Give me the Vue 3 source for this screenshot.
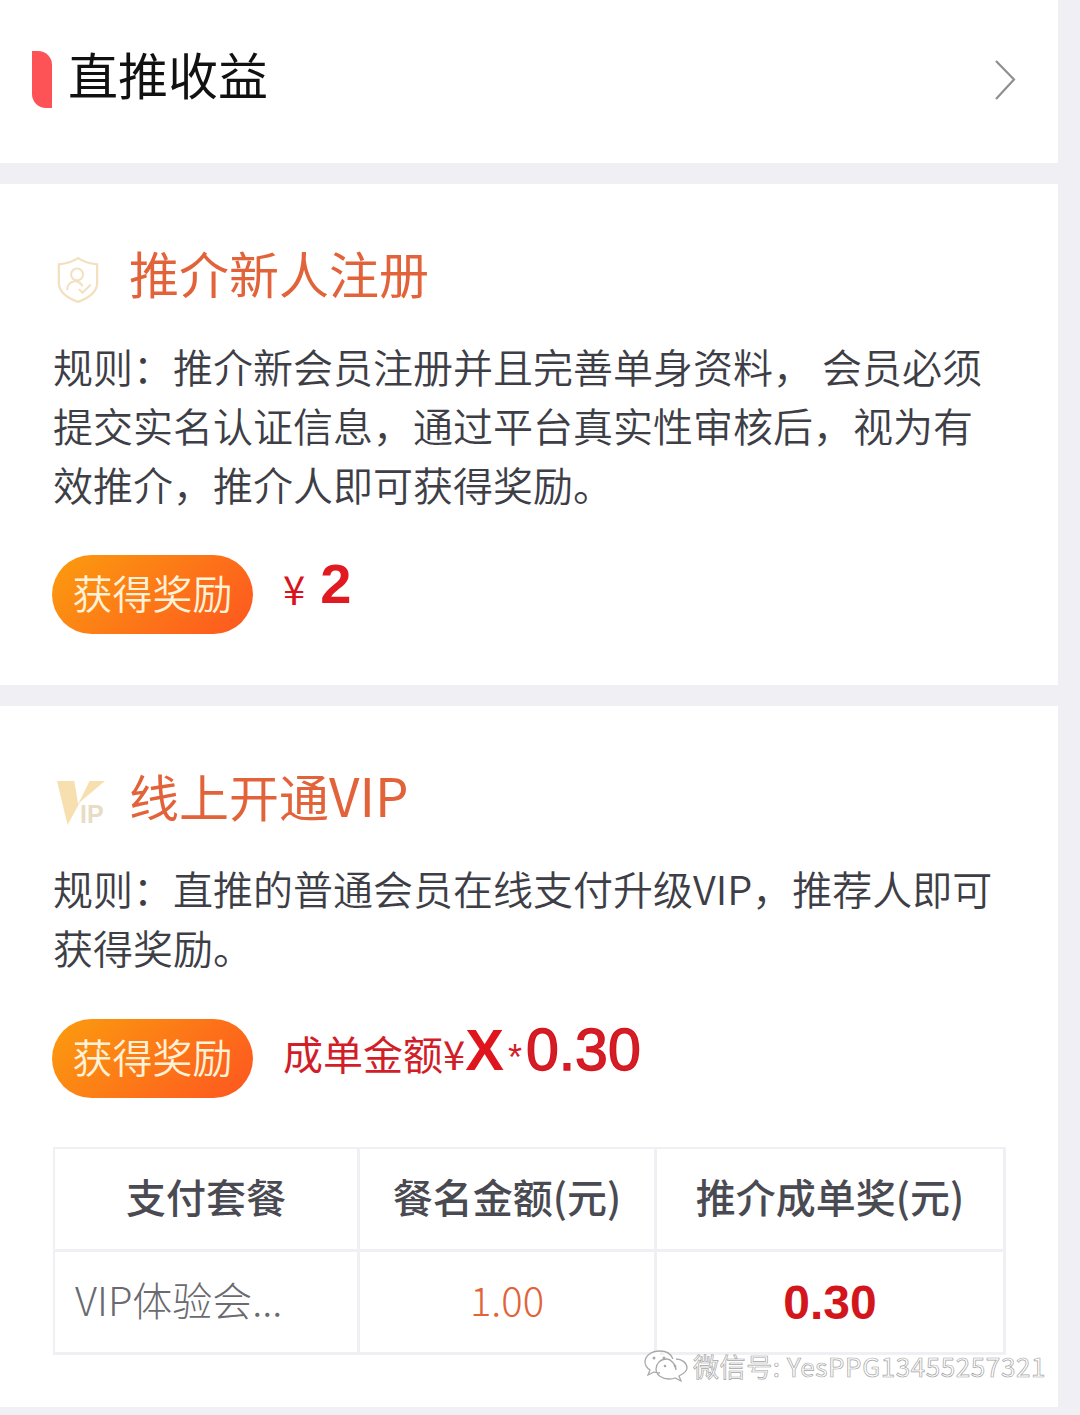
<script setup>
const rows = [{ name: 'VIP体验会...', price: '1.00', bonus: '0.30' }]
</script>

<template>
  <div class="page">
    <section class="card head">
      <span class="mark"></span>
      <h1>直推收益</h1>
      <svg class="arrow" width="24" height="44" viewBox="0 0 24 44">
        <path d="M3 3 L21 21.500 L3 41" fill="none" stroke="#8f8f8f" stroke-width="2.200" />
      </svg>
    </section>

    <section class="card rule-one">
      <div class="title">
        <svg class="ico shield" width="42" height="48" viewBox="0 0 46 52">
          <path d="M23 2 C29 6 36 8 44 9 V29 C44 39 34 46 23 50 C12 46 2 39 2 29 V9 C10 8 17 6 23 2 Z" fill="none" stroke="#f3e0bf" stroke-width="2.500" />
          <circle cx="22" cy="20" r="6.500" fill="none" stroke="#f3e0bf" stroke-width="2.200" />
          <path d="M11 37 C11 31 15 28 20 27 C24 28 27 30 28 33 M24 36 L28 40 L37 31" fill="none" stroke="#f3e0bf" stroke-width="2.200" />
        </svg>
        <h2>推介新人注册</h2>
      </div>
      <p class="desc">规则&#xFF1A;推介新会员注册并且完善单身资料&#xFF0C; 会员必须提交实名认证信息&#xFF0C;通过平台真实性审核后&#xFF0C;视为有效推介&#xFF0C;推介人即可获得奖励。</p>
      <div class="reward">
        <span class="btn">获得奖励</span>
        <span class="yen">¥</span>
        <span class="two">2</span>
      </div>
    </section>

    <section class="card rule-two">
      <div class="title">
        <svg class="ico vip" width="48" height="46" viewBox="0 0 50 48">
          <path d="M0 2 H18 L22 26 L34 2 H50 L24 24 L11 48 Z" fill="#f8dfb0" />
          <text x="24" y="46" class="ip">IP</text>
        </svg>
        <h2>线上开通<span class="latin">VIP</span></h2>
      </div>
      <p class="desc">规则&#xFF1A;直推的普通会员在线支付升级VIP&#xFF0C;推荐人即可获得奖励。</p>
      <div class="reward second">
        <span class="btn">获得奖励</span>
        <span class="amount">成单金额¥<b>X</b><i>*</i><em>0.30</em></span>
      </div>
      <div class="table">
        <div class="cell th">支付套餐</div>
        <div class="cell th">餐名金额(元)</div>
        <div class="cell th">推介成单奖(元)</div>
        <template v-for="r in rows" :key="r.name">
          <div class="cell td-name">{{ r.name }}</div>
          <div class="cell td-price">{{ r.price }}</div>
          <div class="cell td-bonus">{{ r.bonus }}</div>
        </template>
      </div>
    </section>

    <div class="watermark">
      <svg width="46" height="34" viewBox="0 0 46 34">
        <path d="M17 2 C8 2 2 7 2 13 C2 17 4 19 7 21 L5 26 L11 23 C13 24 15 24 17 24 M33 21 C33 15 27 10 24 10 C17 10 13 15 13 20 C13 26 19 30 26 30 C28 30 30 30 32 29 L38 32 L36 27 C40 25 44 22 44 19 C44 14 39 10 33 10 M17 2 C23 2 28 5 30 10" fill="#fff" stroke="#a9a9a9" stroke-width="1.300" />
        <circle cx="11" cy="9" r="1.500" fill="#a9a9a9" />
        <circle cx="21" cy="9" r="1.500" fill="#a9a9a9" />
        <circle cx="22" cy="17" r="1.300" fill="#a9a9a9" />
        <circle cx="32" cy="17" r="1.300" fill="#a9a9a9" />
      </svg>
      <span>微信号: YesPPG13455257321</span>
    </div>
  </div>
</template>

<style scoped>
.page {
  position: relative;
  width: 1080px;
  height: 1415px;
  overflow: hidden;
  background: #f0f0f4;
  font-family: "Noto Sans CJK SC", "Liberation Sans", sans-serif;
  font-weight: 300;
}

.card {
  width: 1058px;
  background: #fff;
  box-sizing: border-box;
}

.head {
  height: 163px;
  display: flex;
  align-items: center;
  padding-left: 32px;
  margin-bottom: 21px;
}

.mark {
  width: 20px;
  height: 57px;
  margin-bottom: 5px;
  background: #fe5356;
  border-radius: 0 14px 0 14px;
}

h1 {
  margin: 0 0 17px 16px;
  font-size: 50px;
  line-height: 60px;
  font-weight: 400;
  color: #111;
}

.arrow {
  margin-left: auto;
  margin-right: 41px;
  margin-bottom: 4px;
}

.rule-one {
  height: 501px;
  padding: 58px 0 0 53px;
  margin-bottom: 21px;
}

.rule-two {
  height: 701px;
  padding: 58px 0 0 53px;
}

.title {
  display: flex;
  align-items: center;
  height: 60px;
}

.ico {
  flex: none;
  overflow: visible;
}

.shield {
  margin: 16px 4px 0;
}

.vip {
  margin: 16px -2px 0 4px;
}

.ip {
  font-family: "Liberation Sans", sans-serif;
  font-size: 26px;
  font-weight: 700;
  fill: #e8dcc4;
}

h2 {
  margin: 0 0 0 26px;
  font-size: 50px;
  line-height: 60px;
  font-weight: 400;
  color: #e2633a;
}

.latin {
  font-size: 53px;
}

.desc {
  width: 950px;
  margin: 35px 0 0;
  font-size: 40px;
  line-height: 59px;
  font-weight: 350;
  color: #3e3e46;
}

.reward {
  display: flex;
  align-items: center;
  margin-top: 41px;
  margin-left: -1px;
}

.reward.second {
  margin-top: 42px;
}

.btn {
  width: 201px;
  height: 79px;
  padding-bottom: 6px;
  box-sizing: border-box;
  border-radius: 40px;
  display: flex;
  align-items: center;
  justify-content: center;
  background: linear-gradient(135deg, #fb9c0e, #fe5620);
  color: #fdf1d8;
  font-size: 40px;
  font-weight: 350;
}

.yen {
  margin-left: 30px;
  margin-top: -14px;
  font-size: 40px;
  font-weight: 400;
  color: #d8141c;
}

.two {
  margin-left: 15px;
  margin-top: -22px;
  font-family: "Liberation Sans", sans-serif;
  font-size: 56px;
  font-weight: 700;
  color: #e01a20;
}

.amount {
  margin-left: 30px;
  margin-top: -18px;
  font-size: 40px;
  font-weight: 400;
  color: #d11e28;
  white-space: nowrap;
}

.amount b,
.amount i,
.amount em {
  font-family: "Liberation Sans", sans-serif;
  font-style: normal;
}

.amount b {
  font-size: 58px;
  font-weight: 700;
  color: #e0141c;
}

.amount i {
  font-size: 36px;
  font-weight: 400;
  margin: 0 4px;
}

.amount em {
  font-size: 59px;
  font-weight: 400;
  -webkit-text-stroke: 1.4px #d8141c;
}

.table {
  display: grid;
  grid-template-columns: 305px 297px 349px;
  grid-template-rows: 103px 103px;
  width: 951px;
  margin-top: 49px;
  border: 2px solid #f0f0f4;
  border-width: 2px 0 0 2px;
  box-sizing: content-box;
}

.cell {
  display: flex;
  align-items: center;
  justify-content: center;
  padding-bottom: 6px;
  box-sizing: border-box;
  border: solid #f0f0f4;
  border-width: 0 3px 3px 0;
  white-space: nowrap;
}

.th {
  font-size: 40px;
  font-weight: 500;
  color: #4a4a52;
}

.td-name {
  justify-content: flex-start;
  padding-left: 20px;
  font-size: 40px;
  color: #6a6a70;
}

.td-price {
  font-size: 40px;
  color: #e2633a;
}

.td-bonus {
  font-family: "Liberation Sans", sans-serif;
  font-size: 48px;
  font-weight: 700;
  padding-bottom: 0;
  color: #d3161c;
}

.watermark {
  position: absolute;
  left: 643px;
  top: 1347px;
  display: flex;
  align-items: center;
  gap: 4px;
}

.watermark span {
  font-size: 26px;
  font-weight: 400;
  letter-spacing: 0.6px;
  color: #fff;
  -webkit-text-stroke: 0.7px #a5a5a5;
  white-space: nowrap;
}
</style>
